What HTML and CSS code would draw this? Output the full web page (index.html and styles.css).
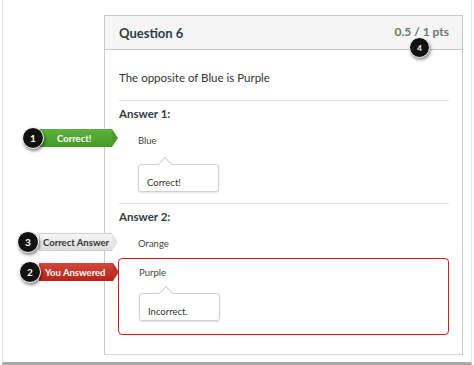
FILE: index.html
```html
<!DOCTYPE html>
<html lang="en">
<head>
  <meta charset="UTF-8" />
  <title>Question 6</title>
  <link rel="stylesheet" href="styles.css">
</head>
<body>
  <div class="shot">
    <div class="card">
      <div class="card-head">
        <h2>Question 6</h2>
        <span class="pts">0.5 / 1 pts</span>
      </div>
      <div class="card-body">
        <p class="question">The opposite of Blue is Purple</p>

        <div class="answer">
          <h3>Answer 1:</h3>
          <div class="choice">Blue</div>
          <div class="comment">Correct!</div>
        </div>

        <div class="answer last">
          <h3>Answer 2:</h3>
          <div class="choice">Orange</div>
          <div class="picked">
            <div class="choice">Purple</div>
            <div class="comment">Incorrect.</div>
          </div>
        </div>
      </div>
    </div>

    <!-- callouts -->
    <div class="num num-4">4</div>
    <div class="tag tag-green"><span class="num">1</span>Correct!</div>
    <div class="tag tag-gray"><span class="num">3</span>Correct Answer</div>
    <div class="tag tag-red"><span class="num">2</span>You Answered</div>
  </div>
</body>
</html>
```

FILE: styles.css
```css
* {
  box-sizing: border-box;
}
body {
  margin: 0;
  font-family: Lato, 'Open Sans', sans-serif;
  color: #2d3b45;
  background: #fff;
}
.shot {
  position: relative;
  width: 470px;
  height: 365px;
  margin-left: 2px;
  border-left: 1px solid #e6e6e6;
  border-right: 1px solid #e6e6e6;
  border-bottom: 3px solid #a8a8a8;
  padding: 15px 0 0 101px;
}
.card {
  width: 359px;
  height: 340px;
  border: 1px solid #c8c8c8;
  border-bottom-color: #d8d8d8;
}
.card-head {
  height: 34px;
  background: #f5f5f5;
  border-bottom: 1px solid #c8c8c8;
  display: flex;
  align-items: center;
  justify-content: space-between;
  padding: 0 13px 0 14px;
}
.card-head h2 {
  margin: 0;
  font-size: 13px;
  font-weight: 700;
  color: #2d3b45;
}
.pts {
  font-size: 12px;
  font-weight: 700;
  color: #6f7478;
  margin-top: -2px;
}
.card-body {
  padding: 0 13px 0 14px;
}
.question {
  margin: 0;
  padding: 21px 0 16px;
  font-size: 11.5px;
  color: #333;
  border-bottom: 1px solid #e4e4e4;
}
.answer {
  border-bottom: 1px solid #e4e4e4;
  padding-bottom: 11px;
}
.answer.last {
  border-bottom: none;
}
.answer h3 {
  margin: 0;
  padding: 5px 0 0;
  font-size: 11.5px;
  font-weight: 700;
  line-height: 16px;
}
.choice {
  font-size: 9.5px;
  color: #444;
  padding: 12px 0 0 19px;
  line-height: 14px;
}
.comment {
  position: relative;
  margin: 16px 0 0 19px;
  width: 81px;
  height: 28px;
  padding: 12px 0 0 8px;
  font-size: 9.5px;
  color: #333;
  border: 1px solid #cfd2d4;
  border-radius: 3px;
  box-shadow: 0 1px 2px rgba(0, 0, 0, 0.12);
  background: #fff;
}
.comment::before {
  content: "";
  position: absolute;
  top: -6px;
  left: 21px;
  width: 9px;
  height: 9px;
  background: #fff;
  border-top: 1px solid #cfd2d4;
  border-left: 1px solid #cfd2d4;
  transform: rotate(45deg);
}
.picked {
  margin: 7px 0 0 -1px;
  height: 77px;
  border: 1.5px solid #d5191d;
  border-radius: 4px;
}
.picked .choice {
  padding: 7px 0 0 20px;
}
.picked .comment {
  margin: 13px 0 0 20px;
}

/* callouts */
.num {
  display: inline-flex;
  align-items: center;
  justify-content: center;
  width: 22px;
  height: 22px;
  border-radius: 50%;
  background: #111;
  color: #fff;
  font-size: 10px;
  font-weight: 700;
  border: 1.5px solid #fff;
  box-shadow: 1px 2px 3px rgba(0, 0, 0, 0.45);
}
.num-4 {
  position: absolute;
  left: 406px;
  top: 37px;
  width: 21px;
  height: 21px;
  font-size: 8px;
}
.tag {
  position: absolute;
  height: 18px;
  display: flex;
  align-items: center;
  font-size: 9.5px;
  font-weight: 700;
  color: #fff;
  white-space: nowrap;
}
.tag::after {
  content: "";
  position: absolute;
  right: -6px;
  top: 0;
  border-top: 9px solid transparent;
  border-bottom: 9px solid transparent;
  border-left: 6px solid #4a9d2b;
}
.tag .num {
  position: absolute;
  left: -14px;
  top: -2px;
}
.tag-green {
  left: 33px;
  top: 129px;
  width: 76px;
  padding-left: 21px;
  background: linear-gradient(#5cb23a, #449a25);
}
.tag-gray {
  left: 36px;
  top: 233px;
  width: 73px;
  padding-left: 3px;
  color: #333;
  background: linear-gradient(#f7f7f7, #dcdcdc);
  border: 1px solid #cfcfcf;
  border-right: none;
}
.tag-gray::after {
  border-left-color: #e6e6e6;
  top: -1px;
}
.tag-gray .num {
  left: -23px;
  top: -3px;
}
.tag-red {
  left: 36px;
  top: 263px;
  width: 74px;
  padding-left: 6px;
  background: linear-gradient(#d6463a, #b5231b);
}
.tag-red::after {
  border-left-color: #c0322a;
}
.tag-red .num {
  left: -20px;
}
```
